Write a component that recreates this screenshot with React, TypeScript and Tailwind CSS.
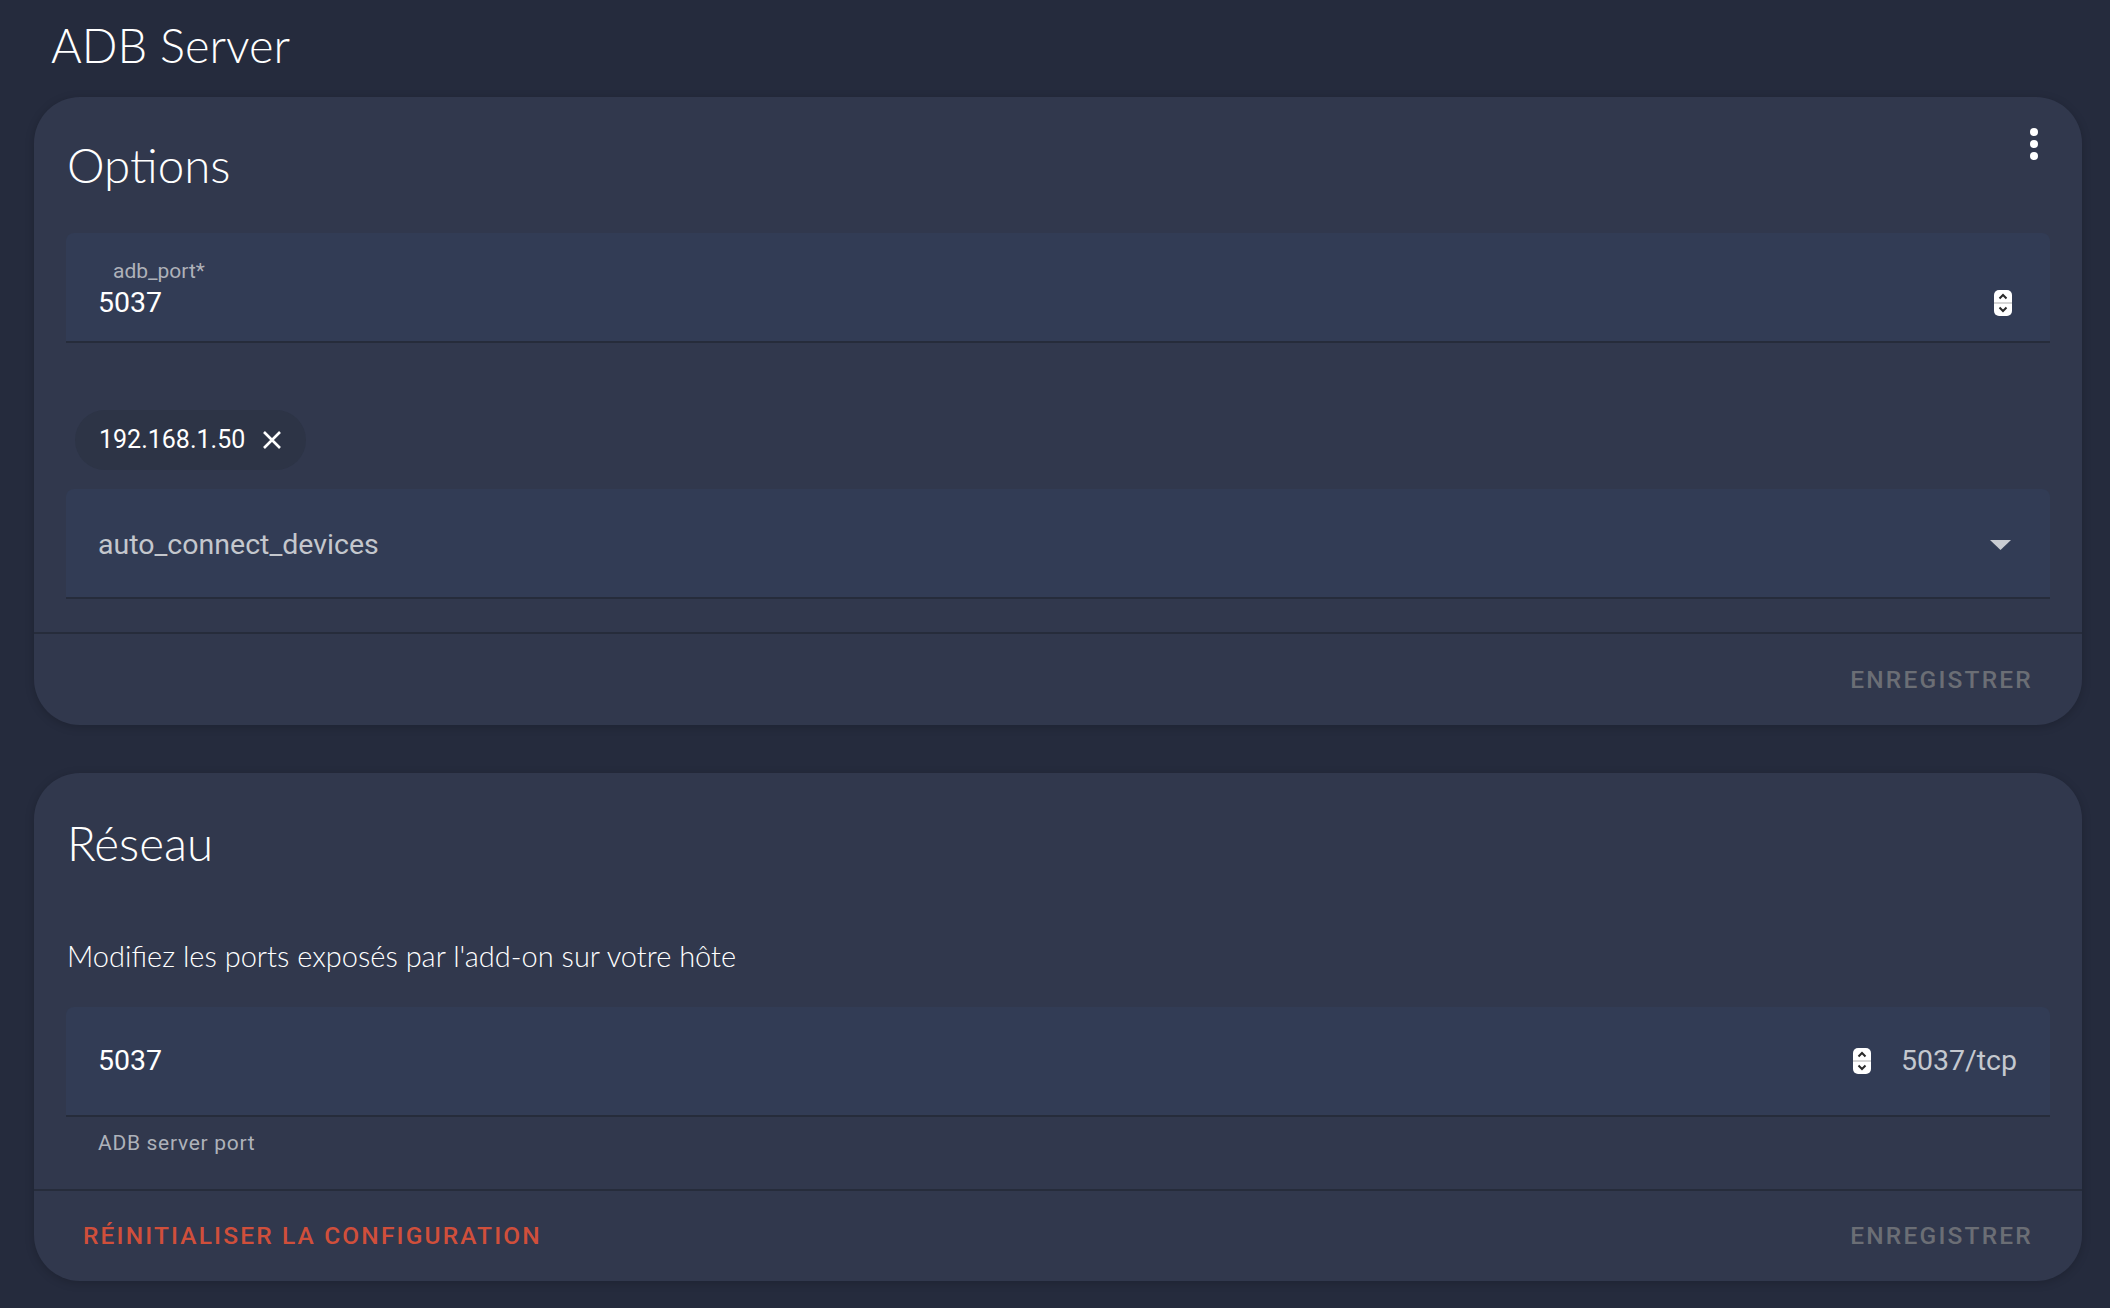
import React from 'react'

const heading = "font-['Lato','Noto_Sans',sans-serif]"
const roboto = "font-['Roboto','Liberation_Sans',sans-serif]"

function Spinner() {
  return (
    <svg width="18" height="26" viewBox="0 0 18 26" className="shrink-0">
      <rect x="0" y="0" width="18" height="26" rx="5" fill="#ffffff" />
      <rect x="0" y="12" width="18" height="2" fill="#d6d6d6" />
      <path d="M5.5 8.5 L9 5 L12.5 8.5" stroke="#2a2a2a" strokeWidth="2" fill="none" />
      <path d="M5.5 17.5 L9 21 L12.5 17.5" stroke="#2a2a2a" strokeWidth="2" fill="none" />
    </svg>
  )
}

function Dots() {
  return (
    <svg width="8" height="32" viewBox="0 0 8 32">
      <circle cx="4" cy="4" r="4" fill="#ffffff" />
      <circle cx="4" cy="16" r="4" fill="#ffffff" />
      <circle cx="4" cy="28" r="4" fill="#ffffff" />
    </svg>
  )
}

function CloseIcon() {
  return (
    <svg width="22" height="22" viewBox="0 0 22 22">
      <path d="M3 3 L19 19 M19 3 L3 19" stroke="#ffffff" strokeWidth="2.6" />
    </svg>
  )
}

function Caret() {
  return (
    <svg width="21" height="10" viewBox="0 0 21 10">
      <polygon points="0,0 21,0 10.5,10" fill="#c9ccd2" />
    </svg>
  )
}

function Actions({reset, tall}: {reset?: boolean; tall?: boolean}) {
  return (
    <div
      className={`flex items-center justify-between border-t-2 border-[#262c3b] px-[49px] ${tall ? 'h-[93px] pt-[1px]' : 'h-[92px]'}`}
    >
      <span
        className={`${roboto} text-[24.5px] font-medium uppercase tracking-[2.15px] text-[#d04f3b]`}
      >
        {reset ? 'Réinitialiser la configuration' : ''}
      </span>
      <span
        className={`${roboto} text-[24.5px] font-medium uppercase tracking-[2.2px] text-[#6b6e75]`}
      >
        Enregistrer
      </span>
    </div>
  )
}

export default function App() {
  return (
    <div className="min-h-screen bg-[#252b3d] pb-[27px] pl-[34px] pr-[28px] text-white">
      <h1 className={`${heading} pl-[17px] pt-[17px] text-[47px] font-light leading-[56px]`}>ADB Server</h1>

      <div className="mt-[24px] rounded-[46px] bg-[#31384d] shadow-[0_2px_10px_rgba(0,0,0,0.18)]">
        <div className="flex items-start justify-between pl-[33px] pr-[28px] pt-[27px]">
          <h2 className={`${heading} mt-[13px] text-[47.5px] font-light leading-[56px]`}>Options</h2>
          <button className="flex h-[40px] w-[40px] items-center justify-center">
            <Dots />
          </button>
        </div>

        <div className="px-[32px] pb-[33px] pt-[40px]">
          <div className="h-[110px] rounded-t-[8px] border-b-2 border-[#262c3b] bg-[#323c55] pl-[32px] pr-[38px] pt-[26px]">
            <div className={`${roboto} ml-[15px] text-[21px] leading-[24px] text-[#aeb1b9]`}>adb_port*</div>
            <div className="mt-[3px] flex items-center justify-between">
              <span className={`${roboto} text-[28.5px] leading-[34px]`}>5037</span>
              <Spinner />
            </div>
          </div>

          <div className="mt-[67px] pl-[9px]">
            <div className="inline-flex h-[60px] items-center gap-[16px] rounded-full bg-[#2d3446] pl-[24px] pr-[23px]">
              <span className={`${roboto} text-[25px] leading-[30px]`}>192.168.1.50</span>
              <CloseIcon />
            </div>
          </div>

          <div className="mt-[19px] flex h-[110px] items-center justify-between rounded-t-[8px] border-b-2 border-[#262c3b] bg-[#323c55] pl-[32px] pr-[39px] pt-[4px]">
            <span className={`${roboto} text-[28.5px] leading-[34px] text-[#c4c7cd]`}>auto_connect_devices</span>
            <Caret />
          </div>
        </div>

        <Actions tall />
      </div>

      <div className="mt-[48px] rounded-[46px] bg-[#31384d] shadow-[0_2px_10px_rgba(0,0,0,0.18)]">
        <div className="pl-[33px] pr-[28px] pt-[42px]">
          <h2 className={`${heading} text-[47.5px] font-light leading-[56px]`}>Réseau</h2>
        </div>

        <div className="px-[32px] pb-[34px]">
          <p className={`${heading} mt-[65px] pl-[1px] text-[29px] font-light leading-[40px]`}>
            Modifiez les ports exposés par l'add-on sur votre hôte
          </p>

          <div className="mt-[31px] flex h-[110px] items-center justify-between rounded-t-[8px] border-b-2 border-[#262c3b] bg-[#323c55] pl-[32px] pr-[33px]">
            <span className={`${roboto} text-[28.5px] leading-[34px]`}>5037</span>
            <div className="flex items-center gap-[30px]">
              <Spinner />
              <span className={`${roboto} text-[28.5px] leading-[34px] text-[#c4c8cf]`}>5037/tcp</span>
            </div>
          </div>

          <div className={`${roboto} mt-[14px] pl-[32px] text-[21px] leading-[24px] tracking-[0.7px] text-[#aeb2ba]`}>
            ADB server port
          </div>
        </div>

        <Actions reset />
      </div>
    </div>
  )
}
